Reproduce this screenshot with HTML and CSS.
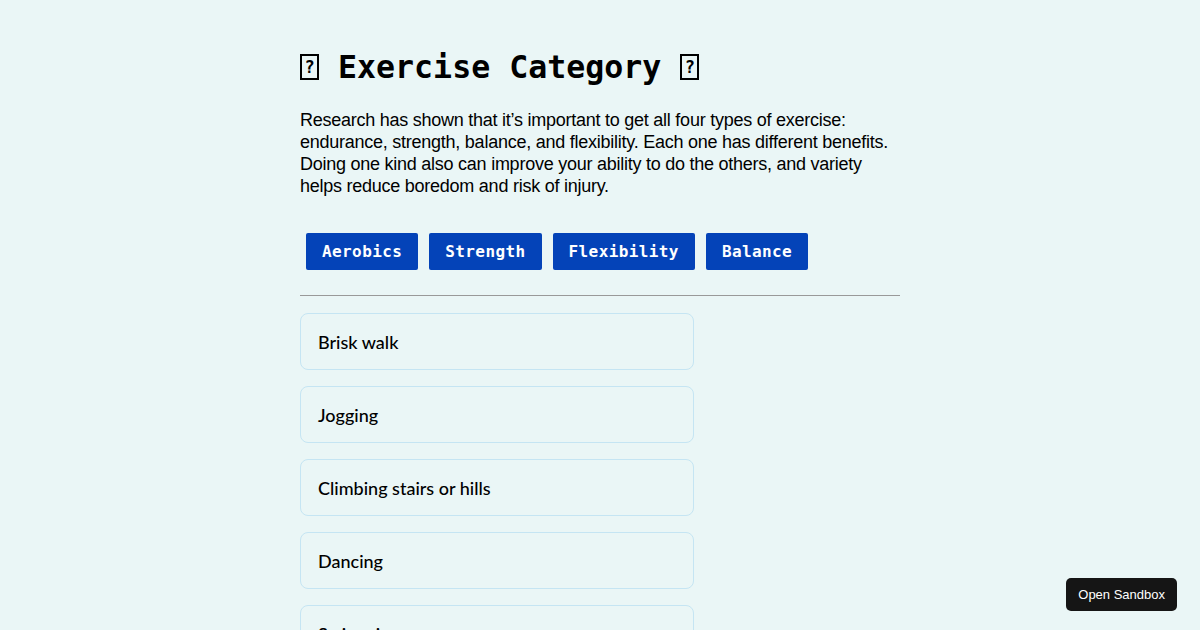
FILE: index.html
```html
<!DOCTYPE html>
<html>
<head>
<meta charset="utf-8">
<link rel="stylesheet" href="styles.css">
</head>
<body>
<main class="page">
  <h1 class="title"><span class="tofu">?</span> Exercise Category <span class="tofu">?</span></h1>
  <p class="intro">Research has shown that it’s important to get all four types of exercise: endurance, strength, balance, and flexibility. Each one has different benefits. Doing one kind also can improve your ability to do the others, and variety helps reduce boredom and risk of injury.</p>
  <div class="tabs">
    <button class="tab">Aerobics</button>
    <button class="tab">Strength</button>
    <button class="tab">Flexibility</button>
    <button class="tab">Balance</button>
  </div>
  <hr class="rule">
  <ul class="list">
    <li class="card">Brisk walk</li>
    <li class="card">Jogging</li>
    <li class="card">Climbing stairs or hills</li>
    <li class="card">Dancing</li>
    <li class="card">Swimming</li>
  </ul>
</main>
<a class="sandbox">Open Sandbox</a>
</body>
</html>
```
FILE: styles.css
```css
html, body {
  margin: 0;
  padding: 0;
  background: #eaf6f6;
  height: 630px;
  overflow: hidden;
}
.page {
  width: 600px;
  margin: 0 auto;
  padding-top: 47px;
}
.title {
  margin: 0;
  font-family: "DejaVu Sans Mono", monospace;
  font-weight: bold;
  font-size: 31.6px;
  line-height: 40px;
  color: #000;
  display: flex;
  align-items: center;
  gap: 19px;
}
.tofu {
  display: inline-flex;
  align-items: center;
  justify-content: center;
  width: 19px;
  height: 26px;
  border: 2px solid #000;
  box-sizing: border-box;
  font-size: 17px;
  line-height: 1;
}
.intro {
  margin: 22px 0 0;
  font-family: "Liberation Sans", Arial, sans-serif;
  font-size: 18px;
  line-height: 22px;
  letter-spacing: -0.25px;
  color: #000;
}
.tabs {
  display: flex;
  gap: 11px;
  margin-top: 36px;
  padding-left: 6px;
}
.tab {
  background: #0443b8;
  color: #fff;
  border: none;
  border-radius: 2px;
  height: 37px;
  padding: 0 16px;
  font-family: "DejaVu Sans Mono", monospace;
  font-weight: bold;
  font-size: 16px;
  letter-spacing: 0.4px;
}
.rule {
  margin: 25px 0 0;
  border: none;
  border-top: 1px solid #999;
}
.list {
  list-style: none;
  margin: 17px 0 0;
  padding: 0;
  display: flex;
  flex-direction: column;
  gap: 16px;
}
.card {
  width: 394px;
  height: 57px;
  box-sizing: border-box;
  border: 1px solid #c5e5f3;
  border-radius: 8px;
  padding: 0 17px;
  display: flex;
  align-items: center;
  font-family: "Lato", sans-serif;
  font-weight: 500;
  font-size: 18px;
  color: #000;
}
.sandbox {
  position: fixed;
  right: 23px;
  bottom: 19px;
  background: #151515;
  color: #fff;
  border-radius: 5px;
  padding: 0 12px;
  height: 33px;
  line-height: 33px;
  font-family: "Liberation Sans", Arial, sans-serif;
  font-size: 13px;
}
```
